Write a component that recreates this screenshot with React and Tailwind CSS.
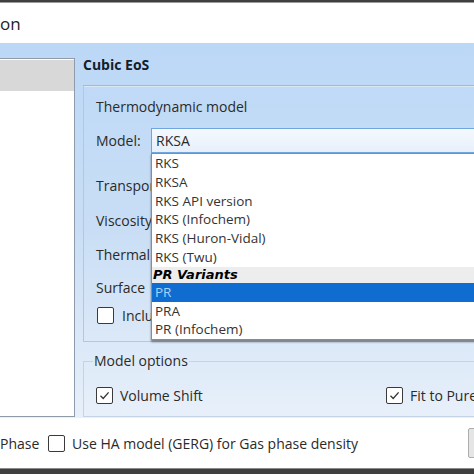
import React from "react";

const Box = ({ checked }) => (
  <span className="flex h-[17px] w-[17px] shrink-0 items-center justify-center rounded-[2px] border border-[#3a3a3a] bg-white">
    {checked && (
      <svg width="13" height="13" viewBox="0 0 13 13" fill="none">
        <path d="M2.5 6.8 L5.2 9.5 L10.6 3.4" stroke="#333" strokeWidth="1.3" />
      </svg>
    )}
  </span>
);

const items = [
  "RKS",
  "RKSA",
  "RKS API version",
  "RKS (Infochem)",
  "RKS (Huron-Vidal)",
  "RKS (Twu)",
];

const prItems = ["PR", "PRA", "PR (Infochem)"];

export default function App() {
  return (
    <div className="h-[474px] w-[474px] overflow-hidden bg-white font-['Open_Sans',sans-serif] text-[#1e1e1e]">
      <div className="w-[560px]">
        {/* window frame top */}
        <div className="h-[3px] border-b border-[#9a9a9a] bg-[#3f3f3f]" />

        {/* title */}
        <div className="flex h-[40px] items-center text-[17px] leading-none">on</div>

        {/* main blue area */}
        <div className="flex h-[375px] bg-gradient-to-b from-[#bcd8f7] via-[#c9def5] to-[#e8f0fa]">
          {/* tree panel */}
          <div className="mt-[15px] h-[359px] w-[75px] shrink-0 border border-l-0 border-[#8e9bab] bg-white pt-[1px]">
            <div className="h-[31px] bg-[#d8d8d8]" />
          </div>

          {/* settings */}
          <div className="flex flex-1 flex-col pl-[8px]">
            <div className="flex h-[43px] items-center border-b border-[#a6b9cf] text-[14px] font-bold text-[#141e2a] shadow-[0_1px_0_#dbe8f6]">
              Cubic EoS
            </div>

            {/* thermodynamic model */}
            <div className="flex h-[256px] flex-col border-b border-l border-[#b3c8e0] pl-[12px] text-[14px] text-[#2a2a2a]">
              <div className="flex h-[40px] items-center">Thermodynamic model</div>

              <div className="mt-[2px] flex h-[25px] items-center">
                <span className="w-[55px]">Model:</span>
                <div className="relative flex-1">
                  <div className="flex h-[25px] items-center border border-[#6fa6df] bg-gradient-to-b from-[#f5f9fe] to-[#e6f0fb] pl-[4px] text-[14px]">
                    RKSA
                  </div>
                  {/* open dropdown list */}
                  <div className="absolute left-0 top-[25px] z-10 w-[420px] border border-[#8c8c8c] bg-white text-[13.5px] leading-[18.8px] text-[#333] shadow-[0_2px_2px_rgba(0,0,0,0.45)]">
                    {items.map((t) => (
                      <div key={t} className="h-[18.8px] pl-[3px]">
                        {t}
                      </div>
                    ))}
                    <div className="h-[16px] bg-[#ededed] pl-[1px] font-['DejaVu_Sans',sans-serif] text-[13px] font-bold italic leading-[16px] text-black">
                      PR Variants
                    </div>
                    {prItems.map((t, i) => (
                      <div
                        key={t}
                        className={
                          i === 0
                            ? "h-[18.8px] bg-[#0f6cd0] pl-[3px] text-[#a9d2fb]"
                            : "h-[18.8px] pl-[3px]"
                        }
                      >
                        {t}
                      </div>
                    ))}
                  </div>
                </div>
              </div>

              <div className="mt-[20px] flex h-[24px] items-center">Transport</div>
              <div className="mt-[11px] flex h-[24px] items-center">Viscosity</div>
              <div className="mt-[10px] flex h-[24px] items-center">Thermal</div>
              <div className="mt-[9px] flex h-[24px] items-center">Surface</div>
              <div className="mt-[8px] flex h-[17px] items-center gap-[8px] pl-[1px]">
                <Box />
                <span>Include</span>
              </div>
            </div>

            {/* model options */}
            <fieldset className="mt-[9px] h-[66px] border border-r-0 border-[#c3d4e6] pl-[9px] text-[14px] text-[#2a2a2a]">
              <legend className="px-[1px] leading-[20px]">Model options</legend>
              <div className="mt-[14px] flex items-center pl-[3px]">
                <div className="flex w-[290px] items-center gap-[7px]">
                  <Box checked />
                  <span>Volume Shift</span>
                </div>
                <div className="flex items-center gap-[7px]">
                  <Box checked />
                  <span className="whitespace-nowrap">Fit to Pure</span>
                </div>
              </div>
            </fieldset>
          </div>
        </div>

        {/* bottom options */}
        <div className="flex h-[50px] items-center text-[14px] text-[#2a2a2a]">
          <span className="w-[48px]">Phase</span>
          <Box />
          <span className="ml-[7px] w-[396px] whitespace-nowrap">Use HA model (GERG) for Gas phase density</span>
          <div className="h-[30px] w-[70px] rounded-[2px] border border-[#adadad] bg-[#e5e5e5]" />
        </div>

        {/* window frame bottom */}
        <div className="h-[6px] border-t border-[#8a8a8a] bg-[#3f3f3f]" />
      </div>
    </div>
  );
}
